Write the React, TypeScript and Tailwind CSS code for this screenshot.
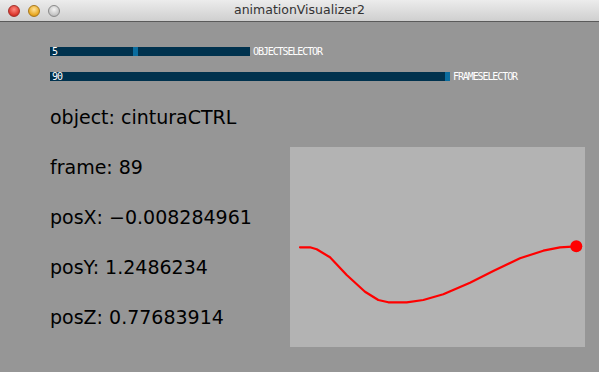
import React from "react";

const pts: [number, number][] = [
  [10, 100.3], [20, 100.3], [26.7, 102.3], [40, 110.3], [56.7, 128], [75, 144.7],
  [88.3, 153], [98.3, 155.3], [116.7, 155.3], [133.3, 153], [153.3, 147.3],
  [180, 135.7], [203.3, 124], [230, 111.3], [253.3, 103.7], [270, 100.3], [286.3, 99.3],
];

function Slider({ width, value, handle, label }: { width: number; value: string; handle: number; label: string }) {
  return (
    <div className="flex items-center h-[9px]">
      <div className="relative h-[9px] bg-[#00324e]" style={{ width }}>
        <div className="absolute top-0 h-[9px] w-[5px] bg-[#0a6c9e]" style={{ left: handle }} />
        <span className="absolute left-[2px] top-[-1px] text-[10px] leading-[11px] tracking-[-1.1px] text-white" style={{ fontFamily: '"DejaVu Sans Mono", monospace' }}>{value}</span>
      </div>
      <span className="ml-[3px] text-[10px] leading-[11px] tracking-[-1.1px] text-white" style={{ fontFamily: '"DejaVu Sans Mono", monospace' }}>{label}</span>
    </div>
  );
}

export default function App() {
  const lines = ["object: cinturaCTRL", "frame: 89", "posX: \u22120.008284961", "posY: 1.2486234", "posZ: 0.77683914"];
  return (
    <div className="w-[599px] h-[372px] flex flex-col bg-[#969696] overflow-hidden" style={{ fontFamily: '"DejaVu Sans", sans-serif' }}>
      <div className="relative h-[22px] shrink-0 flex items-center justify-center bg-gradient-to-b from-[#ececec] to-[#cfcfcf] border-b border-[#5a5a5a]">
        <div className="absolute left-[8px] top-[5px] flex gap-[8px]">
          <div className="w-[12px] h-[12px] rounded-full bg-[radial-gradient(circle_at_50%_35%,#ff8a80,#d9332a_70%,#9a1d18)] border border-[#a3302a]" />
          <div className="w-[12px] h-[12px] rounded-full bg-[radial-gradient(circle_at_50%_35%,#ffe39a,#e7a51c_70%,#a56e10)] border border-[#a8781c]" />
          <div className="w-[12px] h-[12px] rounded-full bg-[radial-gradient(circle_at_50%_35%,#f4f4f4,#c2c2c2_70%,#8f8f8f)] border border-[#8a8a8a]" />
        </div>
        <span className="text-[12.5px] text-[#333] leading-none" style={{ fontFamily: '"DejaVu Sans", sans-serif' }}>animationVisualizer2</span>
      </div>
      <div className="flex flex-col pl-[50px] pt-[25px]">
        <Slider width={200} value="5" handle={83} label="OBJECTSELECTOR" />
        <div className="h-[16px]" />
        <Slider width={400} value="90" handle={395} label="FRAMESELECTOR" />
        <div className="flex mt-[24px]">
          <div className="w-[240px] flex flex-col text-[19px] text-black">
            {lines.map((l) => (
              <div key={l} className="h-[50px] leading-[24px]">{l}</div>
            ))}
          </div>
          <div className="mt-[42px] w-[295px] h-[200px] bg-[#b3b3b3]">
            <svg width="295" height="200" viewBox="0 0 295 200">
              <polyline points={pts.map((p) => p.join(",")).join(" ")} fill="none" stroke="#ff0000" strokeWidth="2.2" strokeLinejoin="round" strokeLinecap="round" />
              <circle cx="286.3" cy="99.3" r="6" fill="#ff0000" />
            </svg>
          </div>
        </div>
      </div>
    </div>
  );
}
